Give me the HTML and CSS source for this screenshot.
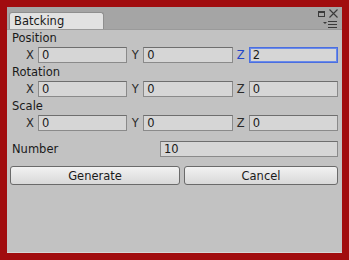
FILE: index.html
```html
<!DOCTYPE html>
<html lang="en">
<head>
    <meta charset="UTF-8" />
    <title>Batcking</title>
    <link rel="stylesheet" href="styles.css">
</head>
<body>
    <div class="window">
        <div class="tab-bar">
            <div class="tab">Batcking</div>
            <div class="win-icons">
                <div class="icon-row">
                    <span class="max-icon"></span>
                    <svg class="close-icon" width="9" height="9" viewBox="0 0 9 9">
                        <path d="M0.5 0.5 L8.5 8.5 M8.5 0.5 L0.5 8.5" stroke="#3a3a3a" stroke-width="1.1" />
                    </svg>
                </div>
                <svg class="menu-icon" width="15" height="7" viewBox="0 0 15 7">
                    <path d="M0 1 H4 L2 3 Z" fill="#3a3a3a" />
                    <rect x="5" y="0" width="9" height="1" fill="#3a3a3a" />
                    <rect x="5" y="3" width="9" height="1" fill="#3a3a3a" />
                    <rect x="5" y="6" width="9" height="1" fill="#3a3a3a" />
                </svg>
            </div>
        </div>

        <div class="content">
            <div class="group-label">Position</div>
            <div class="vec-row">
                <label class="axis">X</label><div class="field">0</div>
                <label class="axis">Y</label><div class="field">0</div>
                <label class="axis active">Z</label><div class="field focused">2</div>
            </div>

            <div class="group-label">Rotation</div>
            <div class="vec-row">
                <label class="axis">X</label><div class="field">0</div>
                <label class="axis">Y</label><div class="field">0</div>
                <label class="axis">Z</label><div class="field">0</div>
            </div>

            <div class="group-label">Scale</div>
            <div class="vec-row">
                <label class="axis">X</label><div class="field">0</div>
                <label class="axis">Y</label><div class="field">0</div>
                <label class="axis">Z</label><div class="field">0</div>
            </div>

            <div class="number-row">
                <span class="number-label">Number</span>
                <div class="field">10</div>
            </div>

            <div class="button-row">
                <button class="btn generate">Generate</button>
                <button class="btn cancel">Cancel</button>
            </div>
        </div>
    </div>
</body>
</html>
```

FILE: styles.css
```css
html,
body {
    margin: 0;
    padding: 0;
}

body {
    width: 349px;
    height: 260px;
    background-color: #a10c0e;
    font-family: "DejaVu Sans", sans-serif;
    font-size: 11px;
    color: #1a1a1a;
    padding: 7px;
    box-sizing: border-box;
}

.window {
    height: 246px;
    background-color: #c2c2c2;
    display: flex;
    flex-direction: column;
    border-bottom: 1px solid #d6d6d6;
    box-sizing: border-box;
}

.tab-bar {
    height: 22px;
    background-color: #a5a5a5;
    display: flex;
    align-items: flex-end;
    justify-content: space-between;
    border-bottom: 1px solid #9a9a9a;
    padding-left: 2px;
}

.tab {
    width: 89px;
    height: 16px;
    background-color: #e2e2e2;
    border: 1px solid #8f8f8f;
    border-bottom: none;
    border-radius: 3px 3px 0 0;
    padding-left: 4px;
    line-height: 16px;
    font-size: 11.5px;
}

.win-icons {
    align-self: stretch;
    display: flex;
    flex-direction: column;
    align-items: flex-end;
    padding: 2px 4px 0 0;
    gap: 3px;
}

.icon-row {
    display: flex;
    align-items: center;
    gap: 4px;
}

.max-icon {
    width: 5px;
    height: 3px;
    border: 1px solid #3a3a3a;
    border-top-width: 2px;
}

.close-icon,
.menu-icon {
    display: block;
}

.content {
    flex: 1;
    padding: 0 4px 0 3px;
}

.group-label {
    height: 16px;
    line-height: 16px;
    padding-left: 2px;
    font-size: 11.5px;
}

.vec-row {
    display: flex;
    align-items: center;
    height: 18px;
    margin: 0 0 0 12px;
}

.axis {
    width: 16px;
    text-align: center;
    color: #2a2a2a;
    font-size: 11.5px;
}

.axis.active {
    color: #2147c8;
}

.field {
    flex: 1;
    height: 14px;
    line-height: 14px;
    background-color: #d6d6d6;
    border: 1px solid #8a8a8a;
    border-top-color: #6e6e6e;
    padding-left: 3px;
    font-size: 11.5px;
}

.field.focused {
    border: 1px solid #4a6ee0;
    box-shadow: inset 0 0 0 1px #6a8ae8;
}

.number-row {
    display: flex;
    align-items: center;
    margin-top: 8px;
    height: 18px;
}

.number-label {
    width: 150px;
    padding-left: 2px;
    box-sizing: border-box;
    font-size: 11.5px;
}

.button-row {
    display: flex;
    gap: 4px;
    margin-top: 8px;
}

.btn {
    height: 19px;
    padding: 0;
    font-family: "DejaVu Sans", sans-serif;
    font-size: 11.5px;
    color: #1a1a1a;
    background: linear-gradient(#f2f2f2, #d8d8d8);
    border: 1px solid #6a6a6a;
    border-radius: 3px;
}

.generate {
    width: 170px;
}

.cancel {
    flex: 1;
}
```
